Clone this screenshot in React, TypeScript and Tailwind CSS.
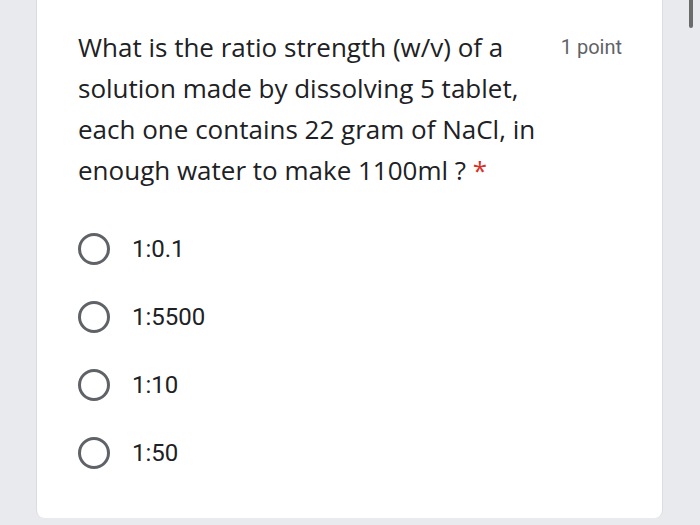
export default function App() {
  const options = ["1:0.1", "1:5500", "1:10", "1:50"];
  const lines = [
    "What is the ratio strength (w/v) of a",
    "solution made by dissolving 5 tablet,",
    "each one contains 22 gram of NaCl, in",
  ];
  return (
    <div
      className="flex h-[525px] w-[700px] bg-[#e8eaee] overflow-hidden"
      style={{ fontFamily: "Roboto, 'Liberation Sans', sans-serif" }}
    >
      <div className="w-[36px] shrink-0" />
      <div className="flex h-[518px] w-[627px] shrink-0 flex-col rounded-b-lg border-l border-r border-[#dadce0] bg-white pl-[41px] pr-[40px]">
        <div className="flex justify-between pt-[27px]">
          <div
            className="text-[26px] leading-[41px] text-[#202124]"
            style={{ fontFamily: "'Open Sans', 'Liberation Sans', sans-serif" }}
          >
            {lines.map((l) => (
              <div key={l} className="whitespace-nowrap">{l}</div>
            ))}
            <div className="whitespace-nowrap">
              enough water to make 1100ml ? <span className="text-[#d93025]">*</span>
            </div>
          </div>
          <span className="pt-[8px] text-[20px] leading-[24px] text-[#5f6368]">1 point</span>
        </div>
        <div className="mt-[42px] flex flex-col gap-[36px]">
          {options.map((o) => (
            <div key={o} className="flex items-center gap-[22px]">
              <div className="h-[32px] w-[32px] rounded-full border-[3px] border-[#5f6368]" />
              <span className="text-[24px] leading-[32px] text-[#202124]">{o}</span>
            </div>
          ))}
        </div>
      </div>
      <div className="relative flex-1">
        <div className="absolute left-[26px] top-0 h-[28px] w-[4px] rounded-b bg-[#6b6b6b]" />
      </div>
    </div>
  );
}
